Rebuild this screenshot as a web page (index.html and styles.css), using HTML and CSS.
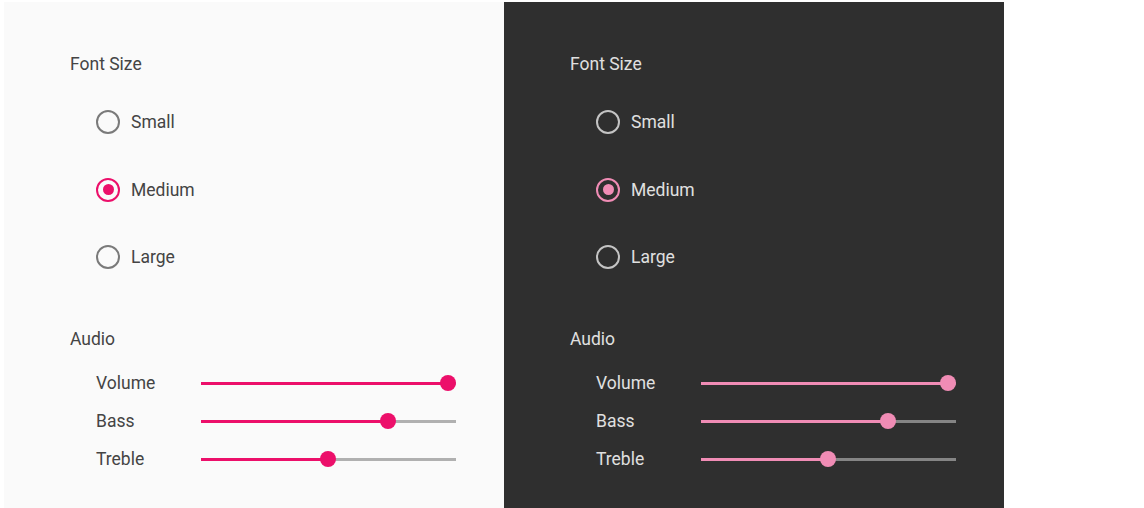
FILE: index.html
```html
<!DOCTYPE html>
<html>
<head>
<meta charset="utf-8">
<link rel="stylesheet" href="styles.css">
</head>
<body>
<div class="stage">
  <section class="panel light">
    <div class="title">Font Size</div>
    <div class="radios">
      <div class="radio"><span class="circle"></span><span class="label">Small</span></div>
      <div class="radio checked"><span class="circle"></span><span class="label">Medium</span></div>
      <div class="radio"><span class="circle"></span><span class="label">Large</span></div>
    </div>
    <div class="title audio">Audio</div>
    <div class="sliders">
      <div class="slider"><span class="slabel">Volume</span><div class="track"><div class="fill" style="width:247px"></div><div class="thumb" style="left:247px"></div></div></div>
      <div class="slider"><span class="slabel">Bass</span><div class="track"><div class="fill" style="width:187px"></div><div class="thumb" style="left:187px"></div></div></div>
      <div class="slider"><span class="slabel">Treble</span><div class="track"><div class="fill" style="width:127px"></div><div class="thumb" style="left:127px"></div></div></div>
    </div>
  </section>
  <section class="panel dark">
    <div class="title">Font Size</div>
    <div class="radios">
      <div class="radio"><span class="circle"></span><span class="label">Small</span></div>
      <div class="radio checked"><span class="circle"></span><span class="label">Medium</span></div>
      <div class="radio"><span class="circle"></span><span class="label">Large</span></div>
    </div>
    <div class="title audio">Audio</div>
    <div class="sliders">
      <div class="slider"><span class="slabel">Volume</span><div class="track"><div class="fill" style="width:247px"></div><div class="thumb" style="left:247px"></div></div></div>
      <div class="slider"><span class="slabel">Bass</span><div class="track"><div class="fill" style="width:187px"></div><div class="thumb" style="left:187px"></div></div></div>
      <div class="slider"><span class="slabel">Treble</span><div class="track"><div class="fill" style="width:127px"></div><div class="thumb" style="left:127px"></div></div></div>
    </div>
  </section>
</div>
</body>
</html>
```

FILE: styles.css
```css
html, body {
  margin: 0;
  padding: 0;
  background: #ffffff;
  font-family: Roboto, "Liberation Sans", sans-serif;
}

.stage {
  display: flex;
  padding: 2px 0 0 4px;
  height: 506px;
}

.panel {
  width: 500px;
  height: 506px;
  box-sizing: border-box;
  padding: 52px 0 0 66px;
  display: flex;
  flex-direction: column;
}

.light {
  background: #fafafa;
  color: #444444;
  --accent: #ec0f6a;
  --ring: #7a7a7a;
  --rail: #b0b0b0;
}

.dark {
  background: #2f2f2f;
  color: #e0e0e0;
  --accent: #f08cb5;
  --ring: #c4c4c4;
  --rail: #858585;
}

.title {
  font-size: 17.5px;
  line-height: 20px;
  height: 20px;
}

.radios {
  display: flex;
  flex-direction: column;
  gap: 43.5px;
  margin-top: 36px;
  padding-left: 26px;
}

.radio {
  display: flex;
  align-items: center;
  height: 24px;
}

.circle {
  width: 24px;
  height: 24px;
  box-sizing: border-box;
  border: 2px solid var(--ring);
  border-radius: 50%;
  display: flex;
  align-items: center;
  justify-content: center;
  margin-right: 11px;
}

.checked .circle {
  border-color: var(--accent);
}

.checked .circle::after {
  content: "";
  width: 11px;
  height: 11px;
  border-radius: 50%;
  background: var(--accent);
}

.label {
  font-size: 17.5px;
  line-height: 24px;
}

.audio {
  margin-top: 60px;
}

.sliders {
  display: flex;
  flex-direction: column;
  gap: 14px;
  margin-top: 22px;
  padding-left: 26px;
}

.slider {
  display: flex;
  align-items: center;
  height: 24px;
}

.slabel {
  width: 105px;
  font-size: 17.5px;
  line-height: 24px;
}

.track {
  position: relative;
  width: 255px;
  height: 3px;
  background: var(--rail);
}

.fill {
  height: 3px;
  background: var(--accent);
}

.thumb {
  position: absolute;
  top: 50%;
  width: 16px;
  height: 16px;
  margin: -8px 0 0 -8px;
  border-radius: 50%;
  background: var(--accent);
}
```
